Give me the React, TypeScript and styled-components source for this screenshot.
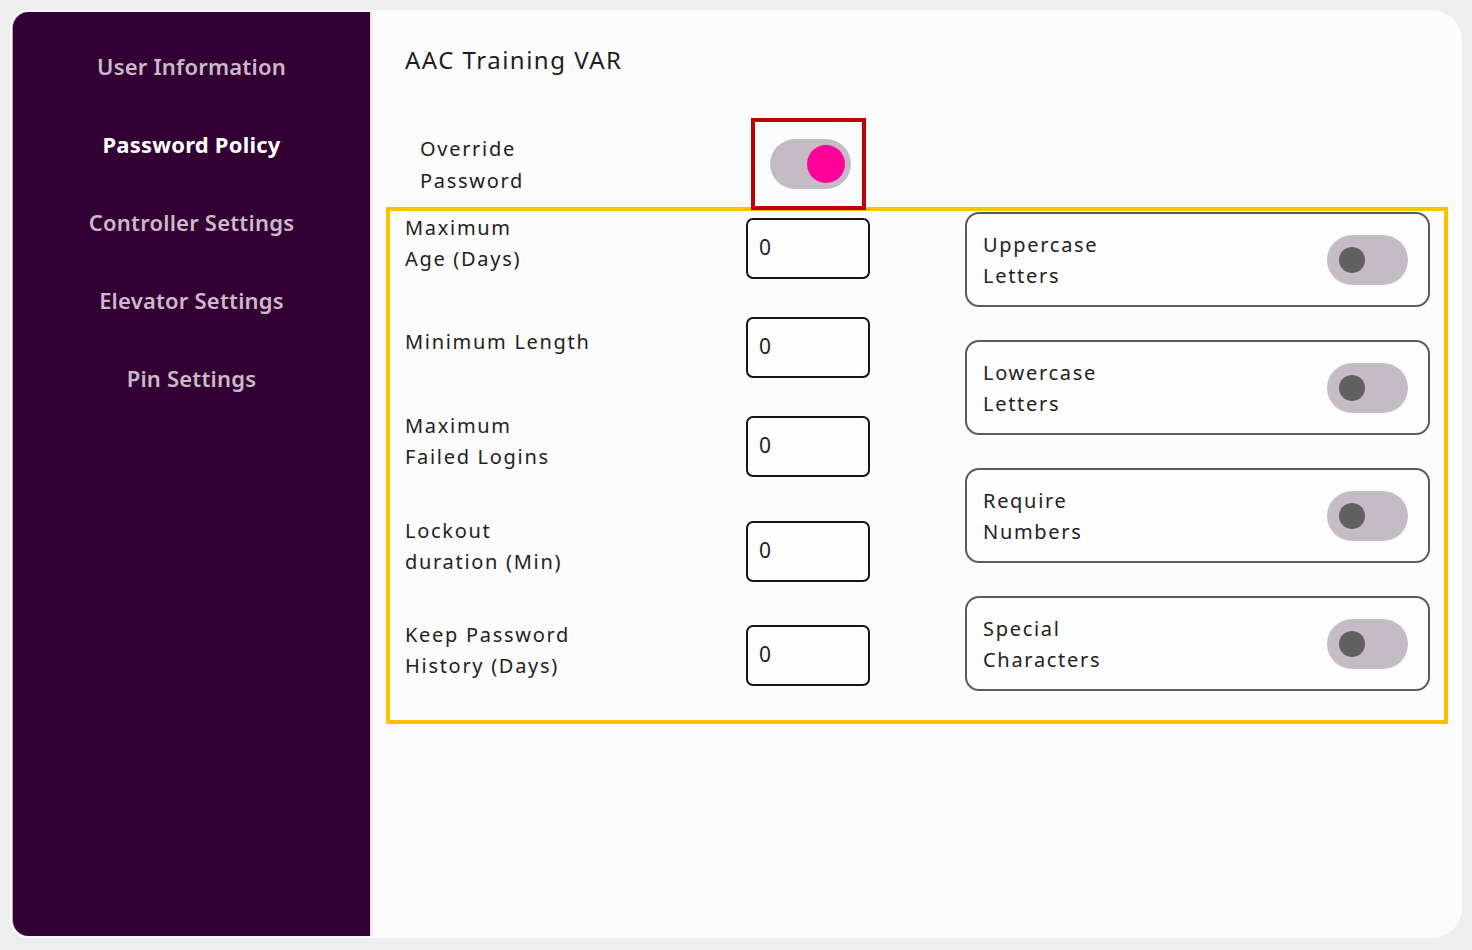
import React from "react";
import styled, { createGlobalStyle } from "styled-components";

const GlobalStyle = createGlobalStyle`
  html, body { margin: 0; padding: 0; background: #eeeeee; }
  body { font-family: "Noto Sans", "Open Sans", sans-serif; }
  * { box-sizing: border-box; }
`;

const Page = styled.div`
  width: 1472px;
  height: 950px;
  padding: 10px 10px 12px 10px;
`;

const Card = styled.div`
  display: flex;
  width: 1452px;
  height: 928px;
  background: #fcfcfc;
  border-radius: 18px 30px 30px 18px;
  padding: 2px 0 2px 2px;
`;

const Sidebar = styled.nav`
  width: 358px;
  flex: none;
  background: #330033;
  border-radius: 16px 0 0 16px;
  border-left: 1px solid #b9a7b9;
  box-shadow: 2px 0 2px rgba(0, 0, 0, 0.1);
  display: flex;
  flex-direction: column;
  align-items: center;
  padding-top: 40px;
  gap: 50px;
`;

const NavItem = styled.div<{ $active?: boolean }>`
  font-size: 22px;
  line-height: 28px;
  font-weight: ${(p) => (p.$active ? 700 : 600)};
  color: ${(p) => (p.$active ? "#ffffff" : "#cbb8cb")};
  letter-spacing: 0.2px;
  white-space: nowrap;
`;

const Main = styled.main`
  flex: 1;
  padding: 32px 0 0 16px;
  display: flex;
  flex-direction: column;
`;

const Title = styled.h1`
  margin: 0 0 0 19px;
  font-size: 24px;
  line-height: 32px;
  font-weight: 400;
  color: #1e1e1e;
  letter-spacing: 1.5px;
`;

const OverrideRow = styled.div`
  display: flex;
  align-items: flex-start;
  margin-top: 42px;
  position: relative;
  z-index: 1;
`;

const Label = styled.div`
  font-size: 20px;
  line-height: 31px;
  color: #222222;
  letter-spacing: 1.7px;
`;

const OverrideLabel = styled(Label)`
  width: 331px;
  margin: 15px 0 0 34px;
  line-height: 32px;
`;

const RedFrame = styled.div`
  border: 4px solid #c00000;
  width: 115px;
  height: 92px;
  padding: 17px 0 0 15px;
`;

const Track = styled.div<{ $on?: boolean }>`
  width: 81px;
  height: 50px;
  border-radius: 25px;
  background: #c4bbc4;
  display: flex;
  align-items: center;
  justify-content: ${(p) => (p.$on ? "flex-end" : "flex-start")};
  padding: ${(p) => (p.$on ? "0 6px 0 0" : "0 0 0 12px")};
  flex: none;
`;

const Thumb = styled.div<{ $on?: boolean }>`
  width: ${(p) => (p.$on ? 38 : 26)}px;
  height: ${(p) => (p.$on ? 38 : 26)}px;
  border-radius: 50%;
  background: ${(p) => (p.$on ? "#ff0099" : "#606060")};
`;

const YellowFrame = styled.div`
  margin-top: -3px;
  width: 1062px;
  border: 4px solid #ffc000;
  display: flex;
  padding: 0 14px 29px 15px;
`;

const LeftCol = styled.div`
  display: flex;
  flex-direction: column;
  margin-top: 7px;
`;

const FieldRow = styled.div<{ $space: number }>`
  display: flex;
  align-items: center;
  height: 61px;
  margin-top: ${(p) => p.$space}px;
`;

const FieldLabel = styled(Label)`
  width: 341px;
  padding-bottom: 12px;
  white-space: pre-line;
`;

const NumberInput = styled.input`
  width: 124px;
  height: 61px;
  border: 2.5px solid #151515;
  border-radius: 7px;
  background: #fdfdfd;
  font-family: "Noto Sans", sans-serif;
  font-size: 21px;
  color: #222222;
  padding: 0 0 4px 11px;
  outline: none;
`;

const RightCol = styled.div`
  margin-left: auto;
  margin-top: 1px;
  width: 465px;
  display: flex;
  flex-direction: column;
  gap: 33px;
`;

const OptionCard = styled.div`
  height: 95px;
  border: 2px solid #5c5c5c;
  border-radius: 14px;
  display: flex;
  align-items: center;
  justify-content: space-between;
  padding: 0 20px 0 16px;
  background: #fdfdfd;
`;

const OptionLabel = styled(Label)`
  white-space: pre-line;
`;

const navItems = [
  "User Information",
  "Password Policy",
  "Controller Settings",
  "Elevator Settings",
  "Pin Settings",
];

const fields = [
  { label: "Maximum\nAge (Days)", space: 0 },
  { label: "Minimum Length", space: 38 },
  { label: "Maximum\nFailed Logins", space: 38 },
  { label: "Lockout\nduration (Min)", space: 44 },
  { label: "Keep Password\nHistory (Days)", space: 43 },
];

const options = [
  "Uppercase\nLetters",
  "Lowercase\nLetters",
  "Require\nNumbers",
  "Special\nCharacters",
];

export default function App() {
  return (
    <>
      <GlobalStyle />
      <Page>
        <Card>
          <Sidebar>
            {navItems.map((n) => (
              <NavItem key={n} $active={n === "Password Policy"}>
                {n}
              </NavItem>
            ))}
          </Sidebar>
          <Main>
            <Title>AAC Training VAR</Title>
            <OverrideRow>
              <OverrideLabel>
                Override
                <br />
                Password
              </OverrideLabel>
              <RedFrame>
                <Track $on>
                  <Thumb $on />
                </Track>
              </RedFrame>
            </OverrideRow>
            <YellowFrame>
              <LeftCol>
                {fields.map((f) => (
                  <FieldRow key={f.label} $space={f.space}>
                    <FieldLabel>{f.label}</FieldLabel>
                    <NumberInput value="0" readOnly />
                  </FieldRow>
                ))}
              </LeftCol>
              <RightCol>
                {options.map((o) => (
                  <OptionCard key={o}>
                    <OptionLabel>{o}</OptionLabel>
                    <Track>
                      <Thumb />
                    </Track>
                  </OptionCard>
                ))}
              </RightCol>
            </YellowFrame>
          </Main>
        </Card>
      </Page>
    </>
  );
}
